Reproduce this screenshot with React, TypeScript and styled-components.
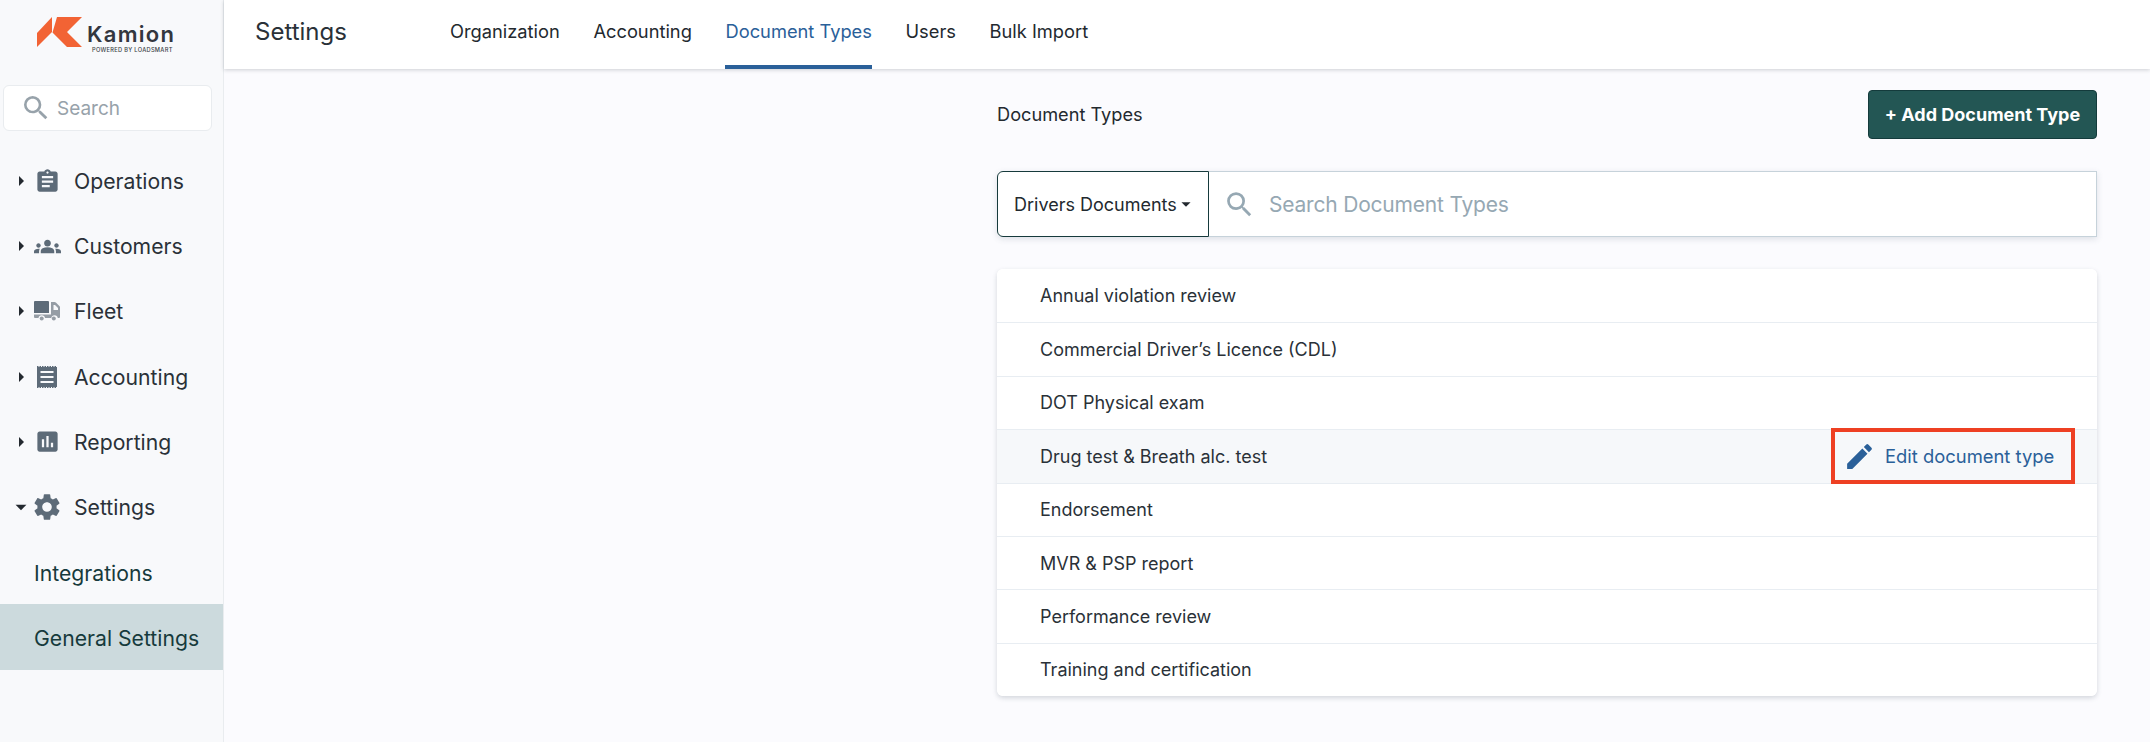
import React from "react";
import styled, { createGlobalStyle } from "styled-components";
import { MdAssignment, MdGroups, MdAssessment, MdSettings, MdEdit, MdSearch, MdArrowRight, MdArrowDropDown } from "react-icons/md";

const Global = createGlobalStyle`
  html, body { margin: 0; padding: 0; height: 100%; }
  body { font-family: "Inter", "Noto Sans", sans-serif; background: #fbfbfe; color: #23292f; }
  #root { height: 100%; }
`;

const Page = styled.div`
  display: flex;
  height: 742px;
  overflow: hidden;
`;

const Sidebar = styled.aside`
  flex: 0 0 224px;
  box-sizing: border-box;
  border-right: 1px solid #e9ecef;
  background: #f8f9fb;
  display: flex;
  flex-direction: column;
`;

const Brand = styled.div`
  height: 85px;
  box-sizing: border-box;
  padding: 17px 0 0 37px;
  display: flex;
  gap: 4px;
`;

const BrandWords = styled.div`
  display: flex;
  flex-direction: column;
  padding-top: 5px;
`;

const BrandName = styled.span`
  font-size: 22px;
  line-height: 24px;
  font-weight: 600;
  letter-spacing: 1.3px;
  color: #33373f;
`;

const BrandTag = styled.span`
  font-size: 5.7px;
  line-height: 8px;
  font-weight: 500;
  letter-spacing: 0.3px;
  margin-left: 5px;
  color: #3a3f46;
  white-space: nowrap;
`;

const SideSearch = styled.div`
  height: 46px;
  width: 209px;
  margin-left: 3px;
  box-sizing: border-box;
  background: #fff;
  border: 1px solid #e9ecef;
  border-radius: 6px;
  display: flex;
  align-items: center;
  gap: 5px;
  padding-left: 16px;
  color: #97a2aa;
  font-size: 19px;
`;

const NavList = styled.nav`
  padding-top: 17px;
  display: flex;
  flex-direction: column;
`;

const NavRow = styled.div<{ $active?: boolean; $sub?: boolean }>`
  height: 65.2px;
  display: flex;
  align-items: center;
  box-sizing: border-box;
  padding: ${(p) => (p.$sub ? "2px" : "1px")} 0 0 ${(p) => (p.$sub ? "34px" : "10px")};
  font-size: 21.2px;
  background: ${(p) => (p.$active ? "#ccdadd" : "transparent")};
  color: ${(p) => (p.$sub ? "#163a3c" : "#2a3138")};
`;

const Caret = styled.span`
  flex: 0 0 22px;
  width: 22px;
  min-width: 0;
  display: flex;
  align-items: center;
  justify-content: center;
  color: #23292f;
  & > svg { flex: none; }
`;

const IconSlot = styled.span`
  flex: 0 0 30px;
  min-width: 0;
  display: flex;
  align-items: center;
  justify-content: center;
  color: #5d6b78;
  margin-right: 12px;
  & > svg { flex: none; }
`;

const Column = styled.div`
  flex: 1;
  display: flex;
  flex-direction: column;
  min-width: 0;
`;

const Header = styled.header`
  height: 69px;
  background: #fff;
  box-shadow: 0 1px 4px rgba(40, 50, 60, 0.22);
  display: flex;
  padding-left: 31px;
  flex: none;
`;

const Title = styled.h1`
  margin: 0;
  font-weight: 400;
  font-size: 24px;
  line-height: 63px;
  width: 195px;
  color: #2a3138;
`;

const Tabs = styled.div`
  display: flex;
  gap: 33.6px;
`;

const Tab = styled.div<{ $active?: boolean }>`
  box-sizing: border-box;
  height: 69px;
  line-height: 63px;
  font-size: 18.3px;
  color: ${(p) => (p.$active ? "#2a6099" : "#23292f")};
  border-bottom: 4px solid ${(p) => (p.$active ? "#2a6099" : "transparent")};
`;

const Main = styled.main`
  flex: 1;
  width: 1100px;
  margin-left: 773px;
`;

const TopRow = styled.div`
  display: flex;
  align-items: center;
  justify-content: space-between;
  padding-top: 21px;
  margin-bottom: 32px;
`;

const SectionName = styled.div`
  font-size: 18.2px;
  color: #23292f;
  padding-bottom: 2px;
`;

const AddButton = styled.button`
  width: 229px;
  height: 49px;
  box-sizing: border-box;
  background: #235654;
  border: 1px solid #143b3c;
  border-radius: 4px;
  color: #fff;
  font: 700 18px "Inter", sans-serif;
  padding: 0;
`;

const SearchBar = styled.div`
  display: flex;
  height: 66px;
  box-sizing: border-box;
  background: #fff;
  border-radius: 6px 0 0 6px;
  box-shadow: 0 2px 6px rgba(60, 80, 100, 0.16);
  margin-bottom: 32px;
`;

const DocSelect = styled.div`
  flex: 0 0 212px;
  box-sizing: border-box;
  border: 1px solid #163a3c;
  border-radius: 6px 0 0 6px;
  display: flex;
  align-items: center;
  padding-left: 16px;
  font-size: 18px;
  color: #23292f;
  white-space: nowrap;
  & > svg { margin-left: -2px; }
`;

const SearchField = styled.div`
  flex: 1;
  box-sizing: border-box;
  border: 1px solid #c6d2da;
  border-left: none;
  display: flex;
  align-items: center;
  gap: 13px;
  padding-left: 14px;
  font-size: 21px;
  letter-spacing: -0.2px;
  color: #96a8b3;
`;

const List = styled.div`
  background: #fff;
  border-radius: 6px;
  box-shadow: 0 2px 5px rgba(50, 65, 80, 0.2);
  overflow: hidden;
`;

const Row = styled.div<{ $hover?: boolean }>`
  height: 53.4px;
  box-sizing: border-box;
  display: flex;
  align-items: center;
  padding-left: 43px;
  font-size: 18px;
  color: #2a3138;
  background: ${(p) => (p.$hover ? "#f6f8fa" : "#fff")};
  border-top: 1px solid #e8edf2;
  &:first-child { border-top: none; }
`;

const EditAction = styled.div`
  margin-left: auto;
  margin-right: 22px;
  width: 244px;
  height: 56px;
  box-sizing: border-box;
  border: 4px solid #ee4023;
  display: flex;
  align-items: center;
  gap: 9px;
  padding-left: 8px;
  font-size: 18.4px;
  color: #2a6099;
  white-space: nowrap;
`;

const Mark = () => (
  <svg width="46" height="31" viewBox="37 17 46 31" fill="#f26334" aria-hidden>
    <polygon points="37,33 52,17 52,32 37,47" />
    <polygon points="57,17 82,17 67,32 82,47 67,47 52.5,32.5" />
  </svg>
);

const Truck = () => (
  <svg width="28" height="22" viewBox="0 0 28 22" aria-hidden>
    <path d="M1 2a1 1 0 0 1 1-1h13a1 1 0 0 1 1 1v11H1z" fill="#5d6b78" />
    <path d="M18 2h3.5c.6 0 1 .2 1.4.6l3.700 3.600c.3.3.4.7.4 1.100V17a1 1 0 0 1-1 1h-1.200a3.300 3.300 0 0 0-6.500 0H12a3.300 3.300 0 0 0-6.500 0H2a1 1 0 0 1-1-1v-2.500h17zM20.500 5v5h4.500V8l-3-3z" fill="#959da5" fillRule="evenodd" />
    <circle cx="8.700" cy="18.500" r="2" fill="#959da5" />
    <circle cx="20.800" cy="18.500" r="2" fill="#959da5" />
  </svg>
);

const Receipt = () => (
  <svg width="20" height="22" viewBox="0 0 20 22" aria-hidden>
    <rect x="0" y="1" width="20" height="20" fill="#5d6b78" />
    <path d="M0 0.500H20M0 21.500H20" stroke="#5d6b78" strokeWidth="1" strokeDasharray="1.500 1" />
    <path d="M3.500 6H16.500M3.500 11H16.500M3.500 16H16.500" stroke="#f8f9fb" strokeWidth="2" />
  </svg>
);

const nav: { label: string; icon: React.ReactNode; open?: boolean }[] = [
  { label: "Operations", icon: <MdAssignment size={27} /> },
  { label: "Customers", icon: <MdGroups size={27} /> },
  { label: "Fleet", icon: <Truck /> },
  { label: "Accounting", icon: <Receipt /> },
  { label: "Reporting", icon: <MdAssessment size={27} /> },
  { label: "Settings", icon: <MdSettings size={32} />, open: true },
];

const tabs = ["Organization", "Accounting", "Document Types", "Users", "Bulk Import"];

const rows = [
  "Annual violation review",
  "Commercial Driver’s Licence (CDL)",
  "DOT Physical exam",
  "Drug test & Breath alc. test",
  "Endorsement",
  "MVR & PSP report",
  "Performance review",
  "Training and certification",
];

export default function App() {
  return (
    <Page>
      <Global />
      <Sidebar>
        <Brand>
          <Mark />
          <BrandWords>
            <BrandName>Kamion</BrandName>
            <BrandTag>POWERED BY LOADSMART</BrandTag>
          </BrandWords>
        </Brand>
        <SideSearch>
          <MdSearch size={32} />
          <span>Search</span>
        </SideSearch>
        <NavList>
          {nav.map((n) => (
            <NavRow key={n.label}>
              <Caret>{n.open ? <MdArrowDropDown size={26} /> : <MdArrowRight size={24} />}</Caret>
              <IconSlot>{n.icon}</IconSlot>
              <span>{n.label}</span>
            </NavRow>
          ))}
          <NavRow $sub>Integrations</NavRow>
          <NavRow $sub $active>General Settings</NavRow>
        </NavList>
      </Sidebar>
      <Column>
        <Header>
          <Title>Settings</Title>
          <Tabs>
            {tabs.map((t) => (
              <Tab key={t} $active={t === "Document Types"}>{t}</Tab>
            ))}
          </Tabs>
        </Header>
        <Main>
          <TopRow>
            <SectionName>Document Types</SectionName>
            <AddButton>+ Add Document Type</AddButton>
          </TopRow>
          <SearchBar>
            <DocSelect>
              Drivers Documents
              <MdArrowDropDown size={22} />
            </DocSelect>
            <SearchField>
              <MdSearch size={33} />
              <span>Search Document Types</span>
            </SearchField>
          </SearchBar>
          <List>
            {rows.map((r) => (
              <Row key={r} $hover={r.startsWith("Drug")}>
                {r}
                {r.startsWith("Drug") && (
                  <EditAction>
                    <MdEdit size={33} />
                    Edit document type
                  </EditAction>
                )}
              </Row>
            ))}
          </List>
        </Main>
      </Column>
    </Page>
  );
}
